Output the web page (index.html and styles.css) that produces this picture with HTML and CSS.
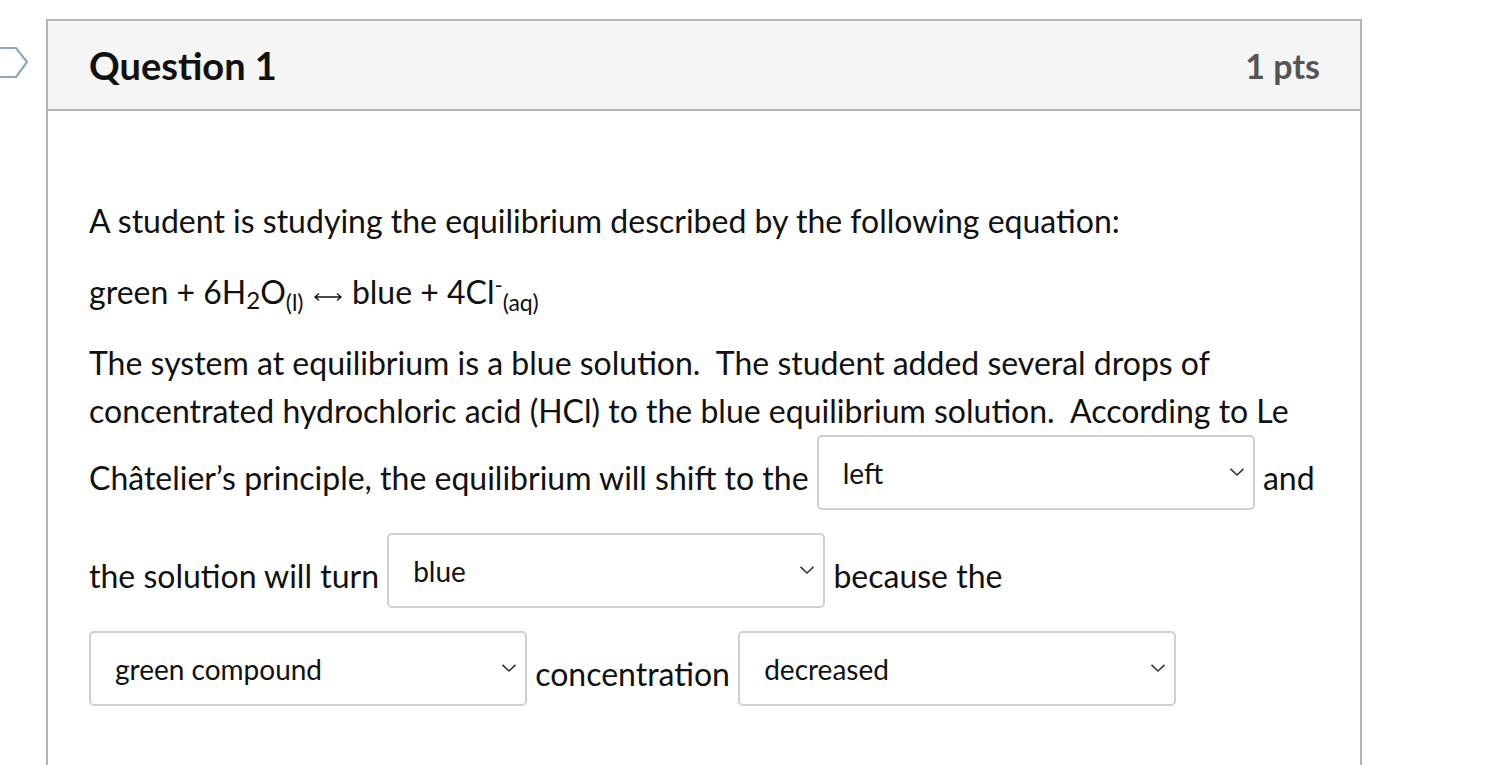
FILE: index.html
```html
<!DOCTYPE html>
<html lang="en">
<head>
<meta charset="utf-8">
<title>Question 1</title>
<link rel="stylesheet" href="styles.css">
</head>
<body>
<div class="page">
  <div class="gutter">
    <svg class="flag" width="30" height="36" viewBox="0 0 30 36" aria-hidden="true">
      <path d="M-10 2 H16 L27 16 L16 31 H-10" fill="none" stroke="#8fa9bf" stroke-width="2.2" stroke-linejoin="round"/>
    </svg>
  </div>
  <div class="question">
    <div class="q-header">
      <h2 class="q-title">Question 1</h2>
      <span class="q-points">1 pts</span>
    </div>
    <div class="q-body">
      <p>A student is studying the equilibrium described by the following equation:</p>
      <p>green + 6H<sub class="num">2</sub>O<sub class="state">(l)</sub> <svg class="arrow" width="28" height="10" viewBox="0 0 28 10" aria-label="equilibrium"><path d="M1 5 H27 M5 1.5 L1 5 L5 8.5 M23 1.5 L27 5 L23 8.5" fill="none" stroke="#111" stroke-width="1.3"/></svg> blue + 4Cl<sup class="charge">-</sup><sub class="state">(aq)</sub></p>
      <p class="answers">The system at equilibrium is a blue solution.&nbsp; The student added several drops of concentrated hydrochloric acid (HCl) to the blue equilibrium solution.&nbsp; According to Le Châtelier’s principle, the equilibrium will shift to the <span class="select"><span class="select-text">left</span><svg class="chev" width="16" height="10" viewBox="0 0 16 10"><path d="M1.5 1.8 L8 8 L14.5 1.8" fill="none" stroke="#333" stroke-width="1.6"/></svg></span> and the solution will turn <span class="select"><span class="select-text">blue</span><svg class="chev" width="16" height="10" viewBox="0 0 16 10"><path d="M1.5 1.8 L8 8 L14.5 1.8" fill="none" stroke="#333" stroke-width="1.6"/></svg></span> because the <span class="select"><span class="select-text">green compound</span><svg class="chev" width="16" height="10" viewBox="0 0 16 10"><path d="M1.5 1.8 L8 8 L14.5 1.8" fill="none" stroke="#333" stroke-width="1.6"/></svg></span> concentration <span class="select"><span class="select-text">decreased</span><svg class="chev" width="16" height="10" viewBox="0 0 16 10"><path d="M1.5 1.8 L8 8 L14.5 1.8" fill="none" stroke="#333" stroke-width="1.6"/></svg></span></p>
    </div>
  </div>
</div>
</body>
</html>
```

FILE: styles.css
```css
html, body {
  margin: 0;
  padding: 0;
  background: #ffffff;
}

body {
  font-family: Lato, "Open Sans", sans-serif;
  color: #111;
  overflow: hidden;
}

.page {
  display: flex;
  align-items: flex-start;
  padding-top: 19px;
}

.gutter {
  width: 46px;
  flex: none;
  padding-top: 27px;
}

.flag {
  display: block;
}

.question {
  width: 1316px;
  flex: none;
  border: 2px solid #b4b4b4;
  border-bottom: none;
  box-sizing: border-box;
  min-height: 760px;
}

.q-header {
  display: flex;
  justify-content: space-between;
  align-items: center;
  height: 88px;
  padding: 0 40px 0 41px;
  background: #f5f5f5;
  border-bottom: 2px solid #b4b4b4;
}

.q-title {
  margin: 0;
  font-size: 38px;
  font-weight: 700;
  color: #111;
}

.q-points {
  font-size: 34px;
  font-weight: 700;
  color: #555;
}

.q-body {
  padding: 86px 36px 0 41px;
  font-size: 32px;
  line-height: 48px;
  color: #111;
}

.q-body p {
  margin: 0 0 23px;
}

.q-body sub,
.q-body sup {
  line-height: 0;
}

.num {
  font-size: 24px;
  vertical-align: -5px;
}

.state {
  font-size: 23px;
  vertical-align: -7px;
}

.charge {
  font-size: 22px;
  vertical-align: 11px;
}

.arrow {
  vertical-align: 2px;
  margin: 0 2px;
}

.select {
  display: inline-flex;
  align-items: center;
  justify-content: space-between;
  box-sizing: border-box;
  width: 438px;
  height: 75px;
  padding: 0 8px 0 24px;
  margin: 0 0 23px;
  border: 2px solid #d0d0d0;
  border-radius: 5px;
  background: #fff;
  vertical-align: 6px;
  line-height: 1;
}

.select-text {
  font-size: 28px;
  color: #111;
  padding-top: 1px;
}

.chev {
  flex: none;
  margin-bottom: 2px;
}
```
